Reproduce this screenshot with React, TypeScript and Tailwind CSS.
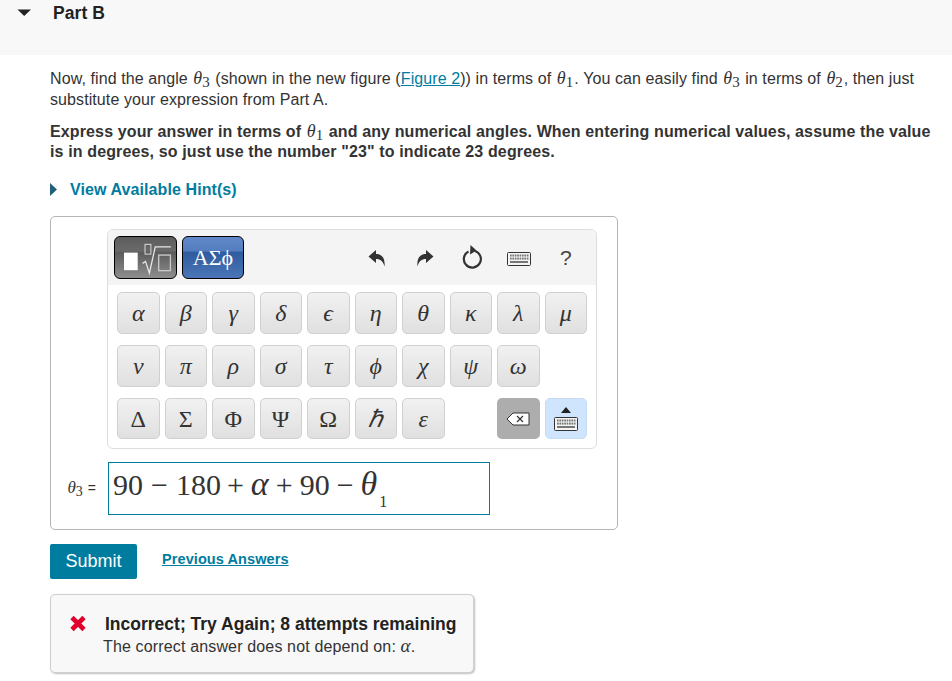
import React from "react";

const Theta = ({ n, small = false }: { n: string; small?: boolean }) => (
  <span className={`font-['Liberation_Serif',serif] font-normal tracking-normal leading-none ${small ? "text-[17px]" : "text-[18px] mx-[1px]"}`}>
    <i>θ</i>
    <span className={`relative top-[3px] leading-none ${small ? "text-[14px]" : "text-[15px]"}`}>{n}</span>
  </span>
);

const Key = ({ children, italic = true, h = "h-[42px]" }: { children?: React.ReactNode; italic?: boolean; h?: string }) => (
  <div
    className={`w-[42.5px] ${h} shrink-0 rounded-[5px] border border-[#d0d0d0] bg-gradient-to-b from-[#f1f1f1] to-[#e0e0e0] flex items-center justify-center font-['Liberation_Serif',serif] text-[#333] text-[24px] leading-none ${
      italic ? "italic" : ""
    }`}
  >
    {children}
  </div>
);

const Keyboard = () => (
  <svg width="24" height="14" viewBox="0 0 24 14">
    <rect x="0.5" y="0.5" width="23" height="13" rx="1" fill="#f4f4f4" stroke="#333" />
    <g fill="#777">
      {[0, 1, 2, 3, 4, 5, 6, 7].map((i) => (
        <rect key={i} x={3 + i * 2.4} y="2.5" width="1.7" height="2" />
      ))}
      {[0, 1, 2, 3, 4, 5, 6, 7].map((i) => (
        <rect key={i} x={3 + i * 2.4} y="5.6" width="1.7" height="2" />
      ))}
      <rect x="3" y="9" width="18" height="2" />
    </g>
  </svg>
);

const rows1 = ["α", "β", "γ", "δ", "ϵ", "η", "θ", "κ", "λ", "μ"];
const rows2 = ["ν", "π", "ρ", "σ", "τ", "ϕ", "χ", "ψ", "ω"];
const rows3 = ["Δ", "Σ", "Φ", "Ψ", "Ω"];

export default function App() {
  return (
    <div className="w-[952px] h-[681px] overflow-hidden bg-white font-['Liberation_Sans',sans-serif] text-[#333] text-[16px] leading-[21px] tracking-[0.09px]">
      <div className="h-[55px] bg-[#f8f8f8] flex items-start pl-[17px] pt-[3px]">
        <svg width="15" height="7" viewBox="0 0 15 7" className="mt-[6px]">
          <path d="M0.5 0.5 H14 L7.2 7 Z" fill="#222" />
        </svg>
        <div className="ml-[21px] font-bold text-[#222] text-[17.5px]">Part B</div>
      </div>

      <div className="pl-[50px] pt-[13px] w-[931px]">
        <p>
          Now, find the angle <Theta n="3" /> (shown in the new figure (
          <span className="text-[#007c9f] underline">Figure 2</span>)) in terms of <Theta n="1" />. You can easily find{" "}
          <Theta n="3" /> in terms of <Theta n="2" />, then just substitute your expression from Part A.
        </p>
        <p className="mt-[12px] font-bold leading-[20px] tracking-[0.13px]">
          Express your answer in terms of <Theta n="1" /> and any numerical angles. When entering numerical values, assume
          the value is in degrees, so just use the number "23" to indicate 23 degrees.
        </p>
        <div className="mt-[17px] flex items-center font-bold text-[#007c9f]">
          <svg width="7" height="13" viewBox="0 0 7 13">
            <path d="M0 0 L7 6.5 L0 13 Z" fill="#22607a" />
          </svg>
          <span className="ml-[13px]">View Available Hint(s)</span>
        </div>

        <div className="mt-[16px] w-[568px] h-[314px] border border-[#b5b5b5] rounded-[5px] pl-[56px] pt-[12px]">
          <div className="w-[490px] h-[220px] border border-[#dedede] rounded-[6px] overflow-hidden">
            <div className="h-[55px] bg-[#f4f4f4] flex items-center pl-[6px]">
              <div className="w-[63px] h-[43px] rounded-[6px] border border-black bg-[linear-gradient(#5c5c5c_0%,#6a6a6a_35%,#5a5a5a_36%,#8e8e8e_100%)] overflow-hidden">
                <svg width="61" height="41" viewBox="0 0 62 42">
                  <rect x="9" y="16" width="14" height="18" fill="#fff" />
                  <rect x="30.5" y="7.5" width="6" height="10" fill="none" stroke="#dcdcdc" />
                  <path d="M28 27 L31 25 L35 37 L41 10 H57" fill="none" stroke="#e8e8e8" strokeWidth="1.3" />
                  <rect x="44.5" y="18.5" width="12" height="16" fill="none" stroke="#c8c8c8" strokeWidth="1.4" />
                </svg>
              </div>
              <div className="ml-[5px] w-[62px] h-[43px] rounded-[6px] border border-black bg-[linear-gradient(#6189c9_0%,#537dbe_35%,#2f5b9f_36%,#4b75b6_100%)] flex items-center justify-center text-white font-['Liberation_Serif',serif] text-[22px] tracking-normal">
                ΑΣϕ
              </div>
              <div className="ml-[124px] flex items-center">
                <svg width="18" height="18" viewBox="0 0 18 18">
                  <path d="M0.5 7.5 L8 1 V5 C13 5 17.5 8 16.5 17.5 C15 12 12.5 10 8 10 V14 Z" fill="#333" />
                </svg>
                <svg width="18" height="18" viewBox="0 0 18 18" className="ml-[30px]">
                  <path d="M17.5 7.5 L10 1 V5 C5 5 0.5 8 1.5 17.5 C3 12 5.5 10 10 10 V14 Z" fill="#333" />
                </svg>
                <svg width="20" height="24" viewBox="0 0 20 24" className="ml-[28px] -mt-[2px]">
                  <path d="M6.5 6.5 A8.5 8.5 0 1 0 13 6" fill="none" stroke="#333" strokeWidth="2.2" />
                  <path d="M8.5 0 L14.5 5.5 L8 9.5 Z" fill="#333" />
                </svg>
                <div className="ml-[25px] mt-[3px]">
                  <Keyboard />
                </div>
                <span className="ml-[29px] text-[21px] text-[#444]">?</span>
              </div>
            </div>
            <div className="pl-[9px] pt-[7px]">
              <div className="flex gap-[5px]">
                {rows1.map((k) => (
                  <Key key={k}>{k}</Key>
                ))}
              </div>
              <div className="flex gap-[5px] mt-[11px]">
                {rows2.map((k) => (
                  <Key key={k}>{k}</Key>
                ))}
              </div>
              <div className="flex gap-[5px] mt-[11px]">
                {rows3.map((k) => (
                  <Key key={k} italic={false} h="h-[41px]">
                    {k}
                  </Key>
                ))}
                <Key h="h-[41px]">ℏ</Key>
                <Key h="h-[41px]">ε</Key>
                <div className="w-[42.5px] shrink-0" />
                <div className="w-[42.5px] h-[41px] shrink-0 rounded-[5px] bg-[#adadad] flex items-center justify-center">
                  <svg width="24" height="14" viewBox="0 0 24 14">
                    <path d="M1 7 L7 1 H23 V13 H7 Z" fill="#fff" stroke="#333" />
                    <path d="M11 4 L17 10 M17 4 L11 10" stroke="#333" strokeWidth="1.2" />
                  </svg>
                </div>
                <div className="w-[42.5px] h-[41px] shrink-0 rounded-[5px] border border-[#c6dcf2] bg-[#cfe5fd] flex flex-col items-center justify-center gap-[4px]">
                  <svg width="10" height="6" viewBox="0 0 10 6">
                    <path d="M0 6 L5 0 L10 6 Z" fill="#222" />
                  </svg>
                  <Keyboard />
                </div>
              </div>
            </div>
          </div>
          <div className="flex items-center -ml-[56px] mt-[13px]">
            <div className="w-[57px] text-[14px] text-right pr-[12px] whitespace-nowrap tracking-normal">
              <Theta n="3" small /><span className="ml-[5px]">=</span>
            </div>
            <div className="w-[382px] h-[53px] border border-[#007c9f] pl-[4px] pt-[2px] font-['Liberation_Serif',serif] text-[30px] leading-[38px] text-[#333] flex items-baseline whitespace-pre tracking-normal">
              <span>90</span>
              <span className="ml-[8px]">−</span>
              <span className="ml-[8px]">180</span>
              <span className="ml-[6px]">+</span>
              <i className="ml-[7px] text-[34px]">α</i>
              <span className="ml-[7px]">+</span>
              <span className="ml-[7px]">90</span>
              <span className="ml-[7px]">−</span>
              <i className="ml-[7px] text-[34px]">θ</i>
              <span className="text-[16px] leading-none relative top-[12px] ml-[2px]">1</span>
            </div>
          </div>
        </div>

        <div className="mt-[14px] flex items-center">
          <div className="w-[87px] h-[35px] bg-[#007c9f] rounded-[2px] text-white flex items-center justify-center text-[18px] tracking-normal">
            Submit
          </div>
          <span className="ml-[25px] font-bold text-[#007c9f] underline text-[14.5px] -mt-[5px]">Previous Answers</span>
        </div>

        <div className="mt-[15px] w-[424px] h-[79px] border border-[#cfcfcf] rounded-[5px] bg-[#f8f8f8] shadow-[1px_1px_2px_rgba(0,0,0,0.25)] flex pl-[18px] pt-[19px]">
          <svg width="18" height="17" viewBox="0 0 18 17" className="mt-[1px] shrink-0">
            <path d="M3 2.5 L15 14.5 M15 2.5 L3 14.5" stroke="#e0002b" strokeWidth="4.6" />
          </svg>
          <div className="ml-[18px]">
            <div className="font-bold text-[17.5px] text-[#222] leading-[20px] tracking-normal">Incorrect; Try Again; 8 attempts remaining</div>
            <div className="text-[16px] -ml-[2px] leading-[26px] tracking-[0.15px]">
              The correct answer does not depend on: <i className="font-['Liberation_Serif',serif] text-[19px] leading-none">α</i>.
            </div>
          </div>
        </div>
      </div>
    </div>
  );
}
